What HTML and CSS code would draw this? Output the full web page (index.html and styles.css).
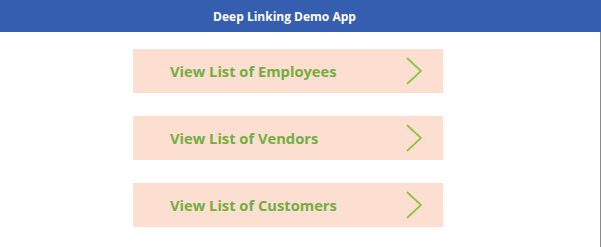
FILE: index.html
```html
<!DOCTYPE html>
<html>
<head>
<meta charset="utf-8">
<link rel="stylesheet" href="styles.css">
</head>
<body>
<header class="topbar"><span class="title">Deep Linking Demo App</span></header>
<main class="content">
  <a class="nav-btn" href="#"><span class="label">View List of Employees</span><svg class="chev" viewBox="0 0 16 28" width="16" height="28"><polyline points="1,1 15,14 1,27" fill="none" stroke="#8cc63f" stroke-width="1.8"/></svg></a>
  <a class="nav-btn" href="#"><span class="label">View List of Vendors</span><svg class="chev" viewBox="0 0 16 28" width="16" height="28"><polyline points="1,1 15,14 1,27" fill="none" stroke="#8cc63f" stroke-width="1.8"/></svg></a>
  <a class="nav-btn" href="#"><span class="label">View List of Customers</span><svg class="chev" viewBox="0 0 16 28" width="16" height="28"><polyline points="1,1 15,14 1,27" fill="none" stroke="#8cc63f" stroke-width="1.8"/></svg></a>
</main>
</body>
</html>
```
FILE: styles.css
```css
html, body {
  margin: 0;
  padding: 0;
  background: #ffffff;
  font-family: "Open Sans", "Liberation Sans", sans-serif;
}
.topbar {
  height: 32px;
  background: #355eb0;
  display: flex;
  align-items: center;
  justify-content: center;
  padding-right: 32px;
}
.title {
  color: #ffffff;
  font-weight: 700;
  font-size: 12px;
}
.content {
  box-sizing: border-box;
  width: 601px;
  height: 215px;
  border-right: 1px solid #8a8a8a;
  padding: 17px 0 0 133px;
  display: flex;
  flex-direction: column;
  gap: 23px;
}
.nav-btn {
  box-sizing: border-box;
  width: 310px;
  height: 44px;
  background: #fddfd2;
  display: flex;
  align-items: center;
  justify-content: space-between;
  padding: 0 21px 0 37px;
  text-decoration: none;
}
.label {
  color: #74ad3f;
  font-weight: 700;
  font-size: 14.7px;
}
.chev {
  display: block;
}
```
